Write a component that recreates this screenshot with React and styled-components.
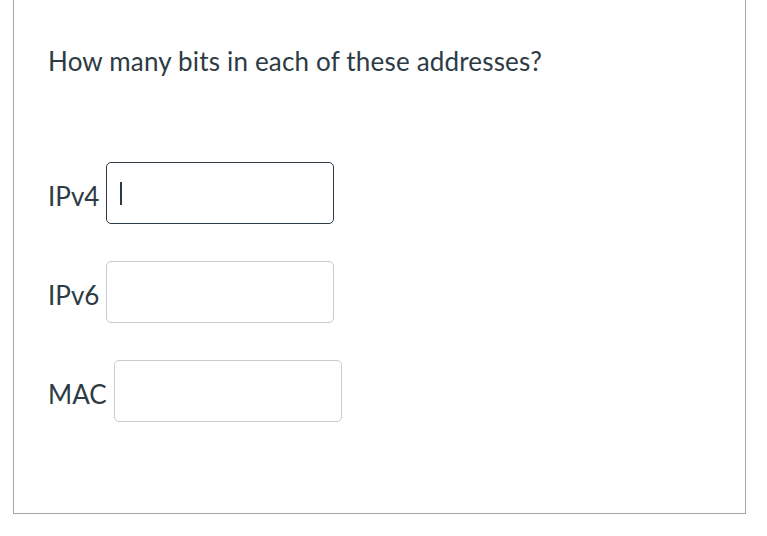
import React from 'react';
import styled, { createGlobalStyle } from 'styled-components';

const GlobalStyle = createGlobalStyle`
  html, body {
    margin: 0;
    padding: 0;
    background: #ffffff;
  }
  body {
    font-family: Lato, "Noto Sans", "Liberation Sans", sans-serif;
    color: #2d3b45;
  }
`;

const Page = styled.div`
  width: 767px;
  height: 536px;
  padding-left: 13px;
  box-sizing: border-box;
`;

const Panel = styled.div`
  width: 733px;
  height: 514px;
  box-sizing: border-box;
  border: 1px solid #a5a5a5;
  border-top: none;
  padding: 46px 0 0 34px;
`;

const Question = styled.p`
  margin: 0 0 85px;
  font-size: 26px;
  line-height: 31px;
  letter-spacing: 0.18px;
  color: #2d3b45;
`;

const Rows = styled.div`
  display: flex;
  flex-direction: column;
  gap: 37px;
`;

const Row = styled.label`
  display: flex;
  align-items: flex-start;
  gap: 7px;
`;

const Label = styled.span`
  padding-top: 19px;
  font-size: 26px;
  line-height: 31px;
  color: #2d3b45;
`;

const FieldWrap = styled.span`
  position: relative;
  display: inline-block;
`;

const Input = styled.input`
  display: block;
  width: 228px;
  height: 62px;
  box-sizing: border-box;
  border: 1px solid ${p => (p.$active ? '#2d3b45' : '#c7cdd1')};
  border-radius: 5px;
  background: #fff;
  outline: none;
  padding: 0 14px;
  font: inherit;
  color: inherit;
  caret-color: transparent;
`;

const Caret = styled.span`
  position: absolute;
  left: 14px;
  top: 20px;
  width: 2px;
  height: 23px;
  background: #2d3b45;
`;

const fields = [
  { label: 'IPv4', active: true },
  { label: 'IPv6' },
  { label: 'MAC' },
];

export default function App() {
  return (
    <Page>
      <GlobalStyle />
      <Panel>
        <Question>How many bits in each of these addresses?</Question>
        <Rows>
          {fields.map(f => (
            <Row key={f.label}>
              <Label>{f.label}</Label>
              <FieldWrap>
                <Input $active={f.active} />
                {f.active && <Caret />}
              </FieldWrap>
            </Row>
          ))}
        </Rows>
      </Panel>
    </Page>
  );
}
